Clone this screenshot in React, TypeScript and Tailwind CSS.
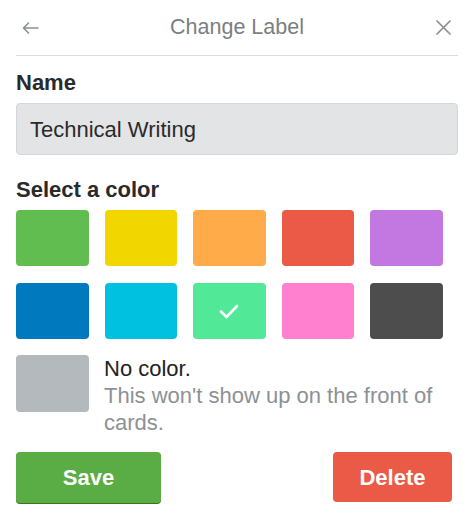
import React from "react";

const colors = [
  "#61bd4f",
  "#f2d600",
  "#ffab4a",
  "#eb5a46",
  "#c377e0",
  "#0079bf",
  "#00c2e0",
  "#51e898",
  "#ff80ce",
  "#4d4d4d",
];

export default function App() {
  return (
    <div
      className="w-[474px] h-[518px] bg-white px-4 text-[22px] text-[#333]"
      style={{ fontFamily: '"Liberation Sans", Arial, sans-serif' }}
    >
      <div className="flex h-[56px] items-center border-b border-[#dcdcdc]">
        <div className="flex w-[40px] items-center pl-[6px]">
          <svg width="17" height="12" viewBox="0 0 17 12" fill="none">
            <path
              d="M16 6H1.5M6.5 1L1.5 6L6.5 11"
              stroke="#8a8f94"
              strokeWidth="1.6"
              strokeLinecap="round"
              strokeLinejoin="round"
            />
          </svg>
        </div>
        <div className="flex-1 text-center text-[21.5px] leading-[27px] text-[#7a7f85]">
          Change Label
        </div>
        <div className="flex w-[40px] items-center justify-end pr-[7px]">
          <svg width="15" height="15" viewBox="0 0 15 15" fill="none">
            <path
              d="M1 1L14 14M14 1L1 14"
              stroke="#8a8f94"
              strokeWidth="1.7"
              strokeLinecap="round"
            />
          </svg>
        </div>
      </div>

      <div className="mt-[13px] font-bold leading-[27px] text-[#2a2a2a]">Name</div>
      <div className="mt-[7px] flex h-[52px] items-center rounded-[4px] border border-[#d4d7d9] bg-[#e2e4e6] px-[13px] leading-[27px] text-[#2a2a2a]">
        Technical Writing
      </div>

      <div className="mt-[21px] font-bold leading-[27px] text-[#2a2a2a]">
        Select a color
      </div>
      <div className="mt-[7px] grid grid-cols-[repeat(5,72.5px)] gap-x-4 gap-y-[17px]">
        {colors.map((c, i) => (
          <div
            key={c}
            className="flex h-[56px] items-center justify-center rounded-[4px]"
            style={{ backgroundColor: c }}
          >
            {i === 7 && (
              <svg width="20" height="15" viewBox="0 0 20 15" fill="none">
                <path
                  d="M2 7.5L7.5 13L18 2"
                  stroke="white"
                  strokeWidth="2.6"
                  strokeLinecap="round"
                  strokeLinejoin="round"
                />
              </svg>
            )}
          </div>
        ))}
      </div>

      <div className="mt-[16px] flex gap-[15.5px]">
        <div className="h-[57px] w-[72.5px] shrink-0 rounded-[4px] bg-[#b4b9be]" />
        <div className="leading-[27px]">
          <div className="text-[#222]">No color.</div>
          <div className="text-[#8c9196]">
            This won't show up on the front of cards.
          </div>
        </div>
      </div>

      <div className="mt-[16px] flex items-start justify-between">
        <button className="flex h-[51px] w-[145px] items-center justify-center rounded-[4px] bg-[#5aac44] font-bold text-white shadow-[0_1px_0_#3f6f21]">
          Save
        </button>
        <button className="mr-[6px] flex h-[50px] w-[119px] items-center justify-center rounded-[4px] bg-[#eb5a46] font-bold text-white">
          Delete
        </button>
      </div>
    </div>
  );
}
